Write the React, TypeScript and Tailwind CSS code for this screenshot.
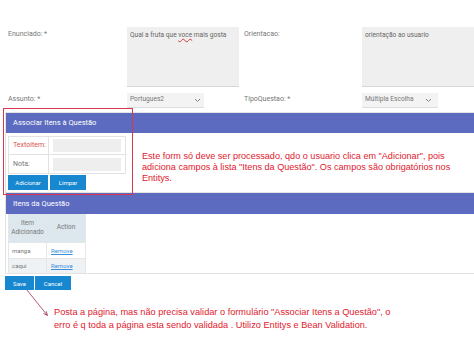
import React from "react";

const Chevron = () => (
  <svg width="7" height="5" viewBox="0 0 7 5" className="shrink-0">
    <path d="M1 1 L3.5 3.5 L6 1" fill="none" stroke="#777" strokeWidth="0.9" />
  </svg>
);

const App = () => {
  return (
    <div className="relative w-[474px] h-[355px] overflow-hidden bg-white font-['Roboto',sans-serif] text-[#777]">
      {/* top form */}
      <div className="pt-[27px]">
        <div className="flex h-[60px]">
          <div className="w-[127px] pl-[8px] pt-[2px] text-[7px] text-[#777]">Enunciado: *</div>
          <div className="w-[112px] h-[60px] bg-[#efefef] border-b border-[#d6d6d6] px-[3px] pt-[4px] text-[6.6px] text-[#666] whitespace-nowrap">
            <span>Qual a fruta que </span>
            <span className="underline decoration-wavy decoration-[#d33]">voce</span>
            <span> mais gosta</span>
          </div>
          <div className="w-[123px] pl-[5px] pt-[2px] text-[7px] text-[#777]">Orientacao:</div>
          <div className="flex-1 h-[60px] bg-[#efefef] border-b border-[#d6d6d6] px-[3px] pt-[4px] text-[6.6px] text-[#666]">
            orientação ao usuario
          </div>
        </div>
        <div className="flex mt-[6px] h-[15px]">
          <div className="w-[127px] pl-[8px] pt-[1px] text-[7px] text-[#777]">Assunto: *</div>
          <div className="w-[77px] h-[15px] bg-[#f3f3f3] border-b border-[#ddd] flex items-center justify-between px-[3px] text-[6.6px] text-[#777]">
            <span>Portugues2</span>
            <Chevron />
          </div>
          <div className="w-[40px]" />
          <div className="w-[118px] pt-[1px] text-[7px] text-[#777]">TipoQuestao: *</div>
          <div className="w-[76px] h-[15px] bg-[#f3f3f3] border-b border-[#ddd] flex items-center justify-between px-[3px] pr-[6px] text-[6.6px] text-[#777]">
            <span>Múltipla Escolha</span>
            <Chevron />
          </div>
        </div>
      </div>

      {/* panel 1 */}
      <div className="ml-[5px] mt-[4px] border border-[#e3e3e3] border-r-0">
        <div className="h-[20px] bg-[#5c6bc0] flex items-center pl-[7px] text-[7.5px] text-white">Associar Itens à Questão</div>
        <div className="flex h-[59px]">
          <div className="pl-[2px] pt-[3px]">
            <div className="w-[118px] border border-[#e2e2e2] text-[7px]">
              <div className="flex h-[18px] border-b border-[#e2e2e2]">
                <div className="w-[40px] border-r border-[#e2e2e2] flex items-center pl-[4px] text-[#d9534f]">Textoitem:</div>
                <div className="flex-1 flex items-center px-[4px]">
                  <div className="w-full h-[13px] bg-[#eeeeee]" />
                </div>
              </div>
              <div className="flex h-[18px]">
                <div className="w-[40px] border-r border-[#e2e2e2] flex items-center pl-[4px]">Nota:</div>
                <div className="flex-1 flex items-center px-[4px]">
                  <div className="w-full h-[13px] bg-[#eeeeee]" />
                </div>
              </div>
            </div>
            <div className="flex gap-[2px] mt-[1px] text-[6px] text-white">
              <div className="w-[40px] h-[15px] bg-[#1787d0] flex items-center justify-center">Adicionar</div>
              <div className="w-[36px] h-[15px] bg-[#1787d0] flex items-center justify-center">Limpar</div>
            </div>
          </div>
          <div className="pl-[16px] pt-[18px] font-['Liberation_Sans',Arial,sans-serif] text-[9.1px] leading-[11px] text-[#e0202e]">
            Este form só deve ser processado, qdo o usuario clica em "Adicionar", pois
            <br />
            adiciona campos à lista "Itens da Questão". Os campos são obrigatórios nos
            <br />
            Entitys.
          </div>
        </div>
      </div>

      {/* panel 2 */}
      <div className="ml-[5px] border border-[#e3e3e3] border-r-0 border-t-0">
        <div className="h-[21px] bg-[#5c6bc0] flex items-center pl-[7px] text-[7.5px] text-white">Itens da Questão</div>
        <div className="pl-[2px]">
          <table className="w-[78px] border-collapse text-[6.5px]">
            <thead>
              <tr className="h-[28px] bg-[#dde7ee]">
                <th className="w-[38px] border border-t-0 border-[#e6e6e6] font-normal leading-[9px] text-center">
                  Item
                  <br />
                  Adicionado
                </th>
                <th className="border border-t-0 border-[#e6e6e6] font-normal text-center">Action</th>
              </tr>
            </thead>
            <tbody>
              <tr className="h-[16px] bg-white">
                <td className="border border-[#e6e6e6] pl-[3px] text-[6px]">manga</td>
                <td className="border border-[#e6e6e6] pl-[4px] text-[6px] text-[#3a8fd8] underline">Remove</td>
              </tr>
              <tr className="h-[15px] bg-[#eef2f5]">
                <td className="border border-b-0 border-[#e6e6e6] pl-[3px] text-[6px]">caqui</td>
                <td className="border border-b-0 border-[#e6e6e6] pl-[4px] text-[6px] text-[#3a8fd8] underline">Remove</td>
              </tr>
            </tbody>
          </table>
        </div>
      </div>

      <div className="ml-[5px] mt-[2px] flex gap-[1px] text-[6px] text-white">
        <div className="w-[29px] h-[14px] bg-[#1787d0] flex items-center justify-center">Save</div>
        <div className="w-[36px] h-[14px] bg-[#1787d0] flex items-center justify-center">Cancel</div>
      </div>

      <div className="ml-[54px] mt-[16px] font-['Liberation_Sans',Arial,sans-serif] text-[9.2px] leading-[13px] text-[#e0202e]">
        Posta a página, mas não precisa validar o formulário "Associar Itens a Questão", o
        <br />
        erro é q toda a página esta sendo validada . Utilizo Entitys e Bean Validation.
      </div>

      {/* annotations */}
      <div className="absolute left-[3px] top-[108px] w-[130px] h-[87px] border border-[#d9364f]" />
      <svg className="absolute left-0 top-0" width="474" height="355" viewBox="0 0 474 355">
        <line x1="27" y1="290" x2="47" y2="315" stroke="#a0304a" strokeWidth="0.8" />
        <path d="M43.5 313.5 L47.5 315.5 L46.2 311.2" fill="none" stroke="#a0304a" strokeWidth="0.8" />
      </svg>
    </div>
  );
};

export default App;
